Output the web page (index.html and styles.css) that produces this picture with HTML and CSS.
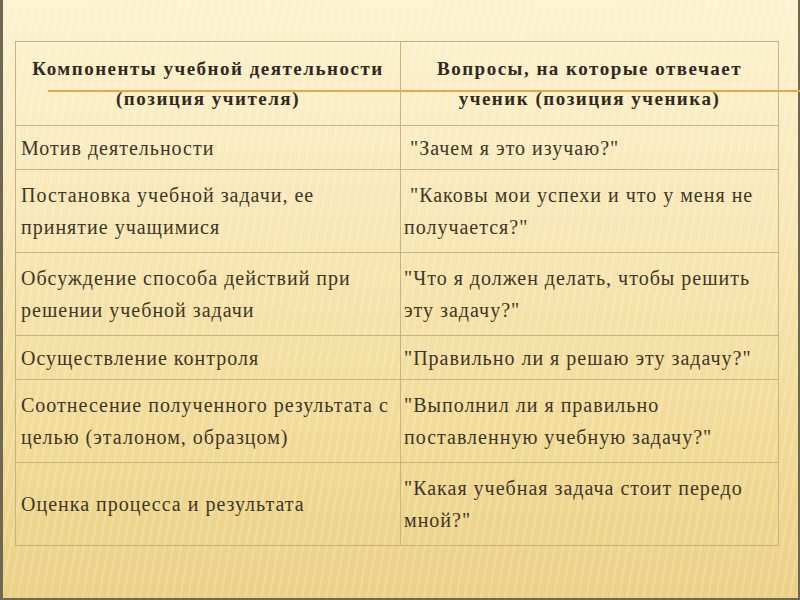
FILE: index.html
```html
<!DOCTYPE html>
<html lang="ru">
<head>
<meta charset="utf-8">
<title>Компоненты учебной деятельности</title>
<link rel="stylesheet" href="styles.css">
</head>
<body>
<div class="slide">
  <div class="accent-line"></div>
  <table class="grid">
    <colgroup>
      <col class="col-left">
      <col class="col-right">
    </colgroup>
    <tr class="row-head">
      <th>Компоненты учебной деятельности<br>(позиция учителя)</th>
      <th>Вопросы, на которые отвечает<br>ученик (позиция ученика)</th>
    </tr>
    <tr class="row-short">
      <td>Мотив деятельности</td>
      <td>&nbsp;"Зачем я это изучаю?"</td>
    </tr>
    <tr class="row-tall">
      <td>Постановка учебной задачи, ее<br>принятие учащимися</td>
      <td>&nbsp;"Каковы мои успехи и что у меня не<br>получается?"</td>
    </tr>
    <tr class="row-tall">
      <td>Обсуждение способа действий при<br>решении учебной задачи</td>
      <td>"Что я должен делать, чтобы решить<br>эту задачу?"</td>
    </tr>
    <tr class="row-short">
      <td>Осуществление контроля</td>
      <td>"Правильно ли я решаю эту задачу?"</td>
    </tr>
    <tr class="row-tall">
      <td>Соотнесение полученного результата с<br>целью (эталоном, образцом)</td>
      <td>"Выполнил ли я правильно<br>поставленную учебную задачу?"</td>
    </tr>
    <tr class="row-tall">
      <td>Оценка процесса и результата</td>
      <td>"Какая учебная задача стоит передо<br>мной?"</td>
    </tr>
  </table>
</div>
</body>
</html>
```

FILE: styles.css
```css
html, body {
  margin: 0;
  padding: 0;
}

body {
  width: 800px;
  height: 600px;
  overflow: hidden;
  font-family: "Liberation Serif", "Times New Roman", serif;
}

.slide {
  position: relative;
  box-sizing: border-box;
  width: 800px;
  height: 600px;
  padding: 41px 0 0 15px;
  border-left: 3px solid #6e6752;
  border-right: 2px solid #6e6752;
  border-bottom: 2px solid #6e6752;
  background:
    repeating-linear-gradient(100deg, rgba(255, 255, 255, 0) 0px, rgba(255, 255, 255, 0) 5px, rgba(255, 255, 255, 0.25) 6px, rgba(255, 255, 255, 0) 8px),
    linear-gradient(180deg, #fdf3d1 0%, #f9e8b8 35%, #f1da95 75%, #ebd087 100%);
}

.accent-line {
  position: absolute;
  left: 45px;
  right: -2px;
  top: 90px;
  height: 2px;
  background: #e4a74a;
}

.grid {
  border-collapse: collapse;
  width: 763px;
  margin-left: -3px;
  table-layout: fixed;
  color: #3d3625;
}

.col-left {
  width: 385px;
}

.col-right {
  width: 378px;
}

.grid th,
.grid td {
  border: 1px solid #c5b585;
  vertical-align: middle;
  padding: 0 2px 0 5px;
  text-align: left;
  white-space: nowrap;
}

.grid th {
  font-weight: bold;
  font-size: 19px;
  letter-spacing: 1.5px;
  line-height: 30px;
  text-align: center;
  color: #302a1c;
  padding: 0;
}

.grid td {
  font-size: 20px;
  letter-spacing: 1px;
  line-height: 32px;
}

.grid td + td {
  padding-left: 3px;
}

.row-head {
  height: 84px;
}

.row-short {
  height: 44px;
}

.row-tall {
  height: 83px;
}
```
